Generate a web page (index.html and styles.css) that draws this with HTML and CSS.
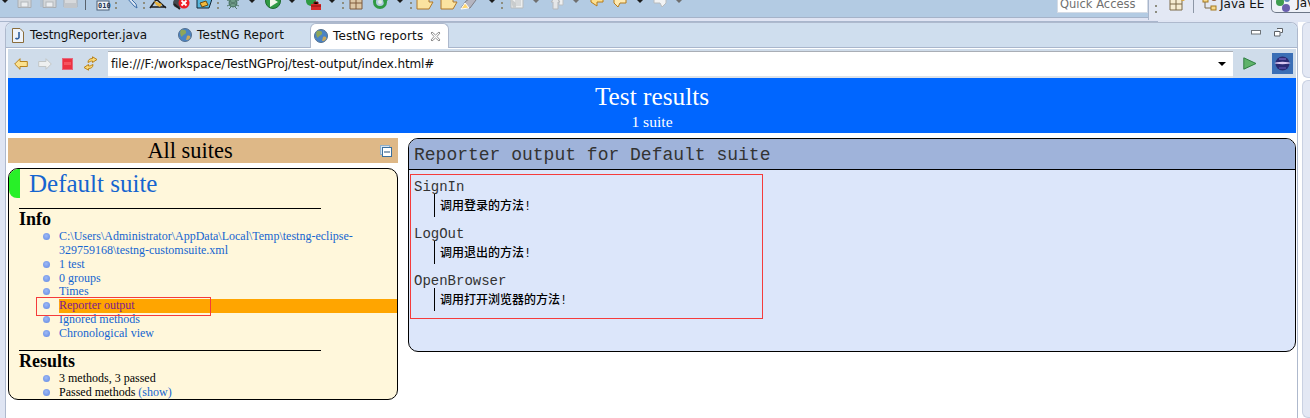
FILE: index.html
```html
<!DOCTYPE html>
<html lang="en">
<head>
<meta charset="utf-8">
<title>TestNG reports</title>
<link rel="stylesheet" href="styles.css">
</head>
<body>
<div class="app">
  <header class="topbar">
    <div class="toolbar">
      <svg class="toolbar-icons" width="700" height="17" viewBox="0 0 700 17">
        <defs>
          <polygon id="caret" points="-4,-1 4,-1 0,3" fill="#1c1c1c"/>
          <polygon id="caret-off" points="-4,-1 4,-1 0,3" fill="#6f6f6f"/>
          <g id="grip" fill="#8d8d7f"><rect x="0" y="2" width="2" height="2"/><rect x="0" y="7" width="2" height="2"/></g>
          <g id="floppy"><path d="M0-4H13V7.500H0Z" fill="#d3d6d9" stroke="#a9adb2"/><rect x="3" y="2" width="7" height="5" fill="#eceef0" stroke="#b4b7bb"/></g>
          <g id="folder"><path d="M0 9V-2H12V2H16L12 9Z" fill="#fbe3a0" stroke="#b0782a"/></g>
        </defs>
        <use href="#caret" x="5"/>
        <use href="#floppy" x="18"/>
        <use href="#floppy" x="43"/><path d="M41 7V-3" stroke="#b7bcc2"/>
        <path d="M64-3H77V7H64Z" fill="#d7d9dc" stroke="#a9adb2"/><rect x="64" y="3" width="13" height="5" fill="#c3c6ca"/>
        <rect x="85" y="0" width="1" height="10" fill="#59626d"/>
        <rect x="97" y="1" width="12" height="9" fill="#eef3f8" stroke="#4d6078"/>
        <text x="98" y="8" class="bin">010</text>
        <use href="#grip" x="115"/>
        <path d="M127-2L134 6L137 8L136 4L129-3Z" fill="#dce6f2" stroke="#3d6ea8"/>
        <use href="#grip" x="143"/>
        <path d="M150 8L158-3M166 8L155-2M151 7H166" fill="none" stroke="#1b1b1b" stroke-width="1.500"/><path d="M154 1L162 4L160 7L156 5Z" fill="#e8b23c"/>
        <circle cx="178" cy="3" r="5" fill="#1d1d1d" opacity=".75"/><path d="M174 4L180 9" stroke="#222" stroke-width="2"/>
        <circle cx="184" cy="3" r="5.500" fill="#ee1c25"/><path d="M181.500 .5L186.500 5.500M186.500 .5L181.500 5.500" stroke="#fff" stroke-width="1.800"/>
        <path d="M197 8V-1H212L209 8Z" fill="#57b6dd" stroke="#123"/><path d="M200 3L206 1L208 5L202 7Z" fill="#f0b93c" stroke="#6b4a12"/>
        <use href="#grip" x="217"/>
        <circle cx="233" cy="3" r="4" fill="#6f9c88" stroke="#3f6e5c"/><path d="M227 0L239 6M227 6L239 0M229 9L232 6M237 9L234 6" stroke="#53786a"/>
        <use href="#caret" x="252"/>
        <circle cx="273" cy="1" r="7.500" fill="#2f9a44" stroke="#1f6b30"/><polygon points="270,-3 278,2 270,7" fill="#f2f7e9"/>
        <use href="#caret" x="292"/>
        <circle cx="311" cy="1" r="5" fill="#2f9a44"/><rect x="311" y="4" width="10" height="6" fill="#d92a2a"/><path d="M311 6H321M314 4V2H318V4" stroke="#8c1111"/>
        <use href="#caret" x="332"/>
        <use href="#grip" x="342"/>
        <path d="M350-2H362V9H350ZM350 3H362M356-2V9" fill="#dcc7a6" stroke="#7e5a3c"/>
        <circle cx="380" cy="2" r="5.500" fill="none" stroke="#2f9a44" stroke-width="3"/><path d="M383 0H388L384 4Z" fill="#2f9a44"/><circle cx="380" cy="2" r="2" fill="#dfeee0"/>
        <use href="#caret" x="400"/>
        <use href="#grip" x="410"/>
        <use href="#folder" x="417"/><path d="M421-1H431" stroke="#48a04d" stroke-width="2"/>
        <use href="#folder" x="441"/>
        <path d="M461 8L466 1L473-3L476 0L470 8Z" fill="#b5b5c0" stroke="#7e7e86"/><path d="M461 9L465 3L469 8Z" fill="#ffd76e" stroke="#fff"/>
        <use href="#caret" x="492"/>
        <use href="#grip" x="501"/>
        <path d="M511-3H523V8H511Z" fill="#eceeef" stroke="#b9bcbd"/><path d="M515 1H521M515 3H521M515 5H521" stroke="#c0c3c5"/><path d="M510-2L516 3V8H513Z" fill="#c9cccd"/>
        <use href="#caret-off" x="536"/>
        <path d="M559-3H563V5H559Z" fill="#eeeff0" stroke="#bcbfc2"/><polygon points="551,2 555.500,-3 560,2 558,2 558,9 553,9 553,2" fill="#e4e6e8" stroke="#b5b8bb"/>
        <use href="#caret-off" x="576"/>
        <path d="M591-3H603V2H597V6L591 2Z" fill="#fddf8f" stroke="#b77c1b"/><path d="M593-1H601" stroke="#fff3c7"/>
        <path d="M614-3H626V3H620L618 7L614 3Z" fill="#feeab3" stroke="#b77c1b"/>
        <use href="#caret" x="640"/>
        <path d="M654-3H666V3L662 7L660 3H654Z" fill="#f2f3f4" stroke="#b9bcbe"/>
        <use href="#caret-off" x="679"/>
      </svg>
      <div class="quick-access">Quick Access</div>
    </div>
    <div class="perspectives">
      <span class="grip"></span>
      <svg class="persp-open" width="18" height="18" viewBox="0 0 18 18"><path d="M1 3H13V14H1ZM1 8H13M7 3V14" fill="#f6ecd2" stroke="#7c6a48"/><circle cx="14" cy="3" r="2" fill="#d9a63e"/></svg>
      <span class="persp-sep"></span>
      <div class="persp persp-ee">
        <svg width="16" height="18" viewBox="0 0 16 18"><rect x="1" y="2" width="5" height="4" fill="#f6d98c" stroke="#a5781f"/><rect x="9" y="10" width="5" height="4" fill="#f6d98c" stroke="#a5781f"/><path d="M3 6V12H9" fill="none" stroke="#7c6a48"/><circle cx="12" cy="2" r="3" fill="#8c5a3c"/></svg>
        <span>Java EE</span>
      </div>
      <div class="persp persp-active">
        <svg width="16" height="18" viewBox="0 0 16 18"><circle cx="5" cy="7" r="4" fill="#3f9d4f"/><circle cx="11" cy="13" r="4" fill="#6a5fae"/><circle cx="12" cy="4" r="3" fill="#5b89b8"/></svg>
        <span>Java</span>
      </div>
    </div>
  </header>

  <div class="workspace">
    <section class="editor">
      <nav class="tabs">
        <div class="tab tab-file">
          <svg width="12" height="15" viewBox="0 0 12 15"><path d="M.5.5H8L11.500 4V14.500H.5Z" fill="#eef3fa" stroke="#8a6d3b"/><path d="M7 4V9.500A2 2 0 0 1 3.500 10" fill="none" stroke="#2f5f9e" stroke-width="1.600"/></svg>
          <span>TestngReporter.java</span>
        </div>
        <div class="tab tab-report">
          <svg class="globe" width="14" height="14" viewBox="0 0 14 14"><circle cx="7" cy="7" r="6.500" fill="#4b84c4" stroke="#53708f"/><path d="M3 2C6 1 9 2 8 5C7 7 5 6 4 9C3 8 1 5 3 2Z" fill="#8ea65a"/><path d="M9 8C11 7 13 8 12 10C11 12 9 12 8 12Z" fill="#c9a95a"/></svg>
          <span>TestNG Report</span>
        </div>
        <div class="tab tab-active">
          <svg class="globe" width="14" height="14" viewBox="0 0 14 14"><circle cx="7" cy="7" r="6.500" fill="#4b84c4" stroke="#53708f"/><path d="M3 2C6 1 9 2 8 5C7 7 5 6 4 9C3 8 1 5 3 2Z" fill="#8ea65a"/><path d="M9 8C11 7 13 8 12 10C11 12 9 12 8 12Z" fill="#c9a95a"/></svg>
          <span>TestNG reports</span>
          <svg class="tab-close" width="11" height="11" viewBox="0 0 11 11"><path d="M1 2L2 1L5.500 4L9 1L10 2L7 5.500L10 9L9 10L5.500 7L2 10L1 9L4 5.500Z" fill="#fff" stroke="#8f8f8f"/></svg>
        </div>
        <div class="view-controls">
          <svg width="10" height="5" viewBox="0 0 10 5"><rect x=".5" y=".5" width="9" height="3.500" fill="#fff" stroke="#6f7479"/></svg>
          <svg width="9" height="9" viewBox="0 0 9 9"><path d="M3 .5H8.500V4.500H6.500M.5 3.500H6V8H.5Z" fill="#fff" stroke="#5d6166"/></svg>
        </div>
      </nav>

      <div class="browser">
        <div class="address-row">
          <div class="nav-icons">
            <svg width="14" height="12" viewBox="0 0 14 12"><path d="M.7 6L6 .7V3.500H13.300V8.500H6V11.300Z" fill="#fbe18f" stroke="#b8821c"/></svg>
            <svg width="14" height="12" viewBox="0 0 14 12"><path d="M13.300 6L8 .7V3.500H.7V8.500H8V11.300Z" fill="#eef0f0" stroke="#c2c6c6"/></svg>
            <svg width="11" height="12" viewBox="0 0 11 12"><rect x=".5" y=".5" width="10" height="11" fill="#ec3141" stroke="#e5677d"/><rect x="2" y="4" width="7" height="3" fill="#f6535f"/></svg>
            <svg width="15" height="15" viewBox="0 0 15 15"><path d="M5 6.500C5 3.500 7 2.500 9.500 2.500V.8L14 3.500L9.500 6.500V5C8 5 7 5.500 5 6.500Z" fill="#fbd874" stroke="#b8821c"/><path d="M10 8.500C10 11.500 8 12.500 5.500 12.500V14.200L1 11.500L5.500 8.500V10C7 10 8 9.500 10 8.500Z" fill="#fbd874" stroke="#b8821c"/></svg>
          </div>
          <div class="url-field">
            <span class="url-text">file:///F:/workspace/TestNGProj/test-output/index.html#</span>
            <svg width="8" height="4" viewBox="0 0 8 4"><polygon points="0,0 8,0 4,4" fill="#000"/></svg>
          </div>
          <svg class="go" width="14" height="13" viewBox="0 0 14 13"><polygon points=".8,.8 13,6.500 .8,12.200" fill="#5fb36b" stroke="#2f7f43"/></svg>
          <svg class="browser-logo" width="21" height="21" viewBox="0 0 21 21"><rect width="21" height="21" fill="#3b6fb6"/><circle cx="10.500" cy="10.500" r="7" fill="#2a2a73"/><ellipse cx="10.500" cy="10" rx="8" ry="1.200" fill="#d8c6f0"/><path d="M7 6H14" stroke="#8f78d8"/><path d="M7 15H14" stroke="#6f5cc0"/></svg>
        </div>

        <div class="report-banner">
          <div class="report-title">Test results</div>
          <div class="report-subtitle">1 suite</div>
        </div>

        <div class="report">
          <aside class="sidebar">
            <div class="all-suites">
              <span>All suites</span>
              <svg class="collapse" width="12" height="12" viewBox="0 0 12 12"><rect x=".5" y=".5" width="9" height="9" fill="#d5e4f2" stroke="#8fb0cc"/><rect x="2.500" y="2.500" width="9" height="9" fill="#fff" stroke="#3a6f9e"/><rect x="4" y="6.500" width="6" height="1" fill="#224f78"/></svg>
            </div>
            <div class="suite">
              <div class="suite-head">
                <span class="suite-status"></span>
                <a class="suite-name">Default suite</a>
              </div>
              <div class="suite-section">
                <h3>Info</h3>
                <ul>
                  <li><a>C:\Users\Administrator\AppData\Local\Temp\testng-eclipse-329759168\testng-customsuite.xml</a></li>
                  <li><a>1 test</a></li>
                  <li><a>0 groups</a></li>
                  <li><a>Times</a></li>
                  <li class="selected"><a>Reporter output</a></li>
                  <li><a>Ignored methods</a></li>
                  <li><a>Chronological view</a></li>
                </ul>
              </div>
              <div class="suite-section results">
                <h3>Results</h3>
                <ul>
                  <li>3 methods, 3 passed</li>
                  <li>Passed methods <a>(show)</a></li>
                </ul>
              </div>
            </div>
            <div class="mark mark-left"></div>
          </aside>

          <main class="panel">
            <h2 class="panel-head">Reporter output for Default suite</h2>
            <div class="panel-body">
              <div class="entry">
                <div class="entry-name">SignIn</div>
                <div class="entry-text">调用登录的方法!</div>
              </div>
              <div class="entry">
                <div class="entry-name">LogOut</div>
                <div class="entry-text">调用退出的方法!</div>
              </div>
              <div class="entry">
                <div class="entry-name">OpenBrowser</div>
                <div class="entry-text">调用打开浏览器的方法!</div>
              </div>
              <div class="mark mark-right"></div>
            </div>
          </main>
        </div>
      </div>
    </section>
    <div class="side-dock">
      <div class="dock-box dock-top"></div>
      <div class="dock-box dock-bottom"></div>
    </div>
  </div>
</div>
</body>
</html>
```
FILE: styles.css
```css
* { box-sizing: border-box; }
html, body { margin: 0; padding: 0; }
body {
  width: 1310px;
  height: 418px;
  overflow: hidden;
  background: #dfe5f3;
  font-family: "Liberation Serif", serif;
}
.app { width: 1310px; height: 418px; display: flex; flex-direction: column; overflow: hidden; }

.topbar { display: flex; height: 22px; flex: none; }
.toolbar {
  width: 1158px;
  height: 22px;
  display: flex;
  align-items: flex-start;
  background: linear-gradient(#b3cbe3 0 17px, #a5b3c9 17px 18px, #e0e4f3 18px 21px, #a9b6cc 21px 22px);
}
.toolbar-icons { flex: none; overflow: hidden; display: block; }
.bin { font: bold 7px "DejaVu Sans Mono", monospace; fill: #1f3550; }
.quick-access {
  margin-left: 357px;
  width: 91px;
  height: 13px;
  flex: none;
  background: #fff;
  border: 1px solid #d4dbe5;
  border-top: 0;
  color: #6f6f6f;
  font: 11.5px/1 "DejaVu Sans", sans-serif;
  padding-left: 2px;
  overflow: hidden;
  display: flex;
  align-items: flex-end;
  padding-bottom: 2px;
}
.perspectives {
  flex: 1;
  display: flex;
  align-items: flex-start;
  height: 20px;
  overflow: hidden;
  background: #e3e8f4;
  border-left: 1px solid #a9b6cc;
  margin-left: -10px;
  padding-left: 5px;
  font: 12px/1 "DejaVu Sans", sans-serif;
}
.grip { width: 2px; height: 8px; margin: 5px 0 0 1px; flex: none; border-top: 2px solid #8d8d7f; border-bottom: 2px solid #8d8d7f; }
.persp-open { margin: -4px 0 0 12px; flex: none; }
.persp-sep { width: 1px; height: 13px; background: #8d97a6; margin: 0 0 0 6px; flex: none; }
.persp { display: flex; align-items: center; gap: 2px; height: 14px; flex: none; margin-left: 6px; color: #111; }
.persp svg { flex: none; margin-top: -4px; }
.persp span { margin-top: -7px; }
.persp-ee { margin-left: 8px; }
.persp-active {
  margin-left: 7px;
  padding-left: 3px;
  gap: 5px;
  height: 13px;
  border: 1px solid #6d7786;
  border-top: 0;
  border-radius: 0 0 0 5px;
  background: #eff2f8;
}

.workspace { flex: 1; display: flex; min-height: 0; }
.editor {
  width: 1293px;
  margin-left: 5px;
  flex: none;
  background: #fff;
  border: 1px solid #aeb9cd;
  border-bottom: 0;
  border-radius: 7px 7px 0 0;
  display: flex;
  flex-direction: column;
  min-height: 0;
  overflow: hidden;
}
.tabs {
  height: 25px;
  flex: none;
  display: flex;
  align-items: stretch;
  background: #cfdeee;
  border-bottom: 1px solid #a9b6cc;
  font: 12px/1 "DejaVu Sans", sans-serif;
  color: #111;
}
.tab { display: flex; align-items: center; gap: 5px; flex: none; }
.tab-file { width: 172px; padding-left: 6px; gap: 6px; letter-spacing: -.1px; }
.tab-report { width: 132px; padding-left: 0; gap: 5px; letter-spacing: .12px; }
.tab-active {
  width: 139px;
  padding-left: 3px;
  background: #fff;
  border: 1px solid #aeb9cd;
  border-bottom: 0;
  border-radius: 6px 6px 0 0;
  gap: 5px;
  height: 25px;
  letter-spacing: .12px;
}
.tab-close { margin-left: 2px; }
.view-controls { margin-left: auto; display: flex; gap: 13px; align-items: center; padding: 0 14px 6px 0; }

.browser { flex: 1; min-height: 0; padding: 0 1px 0 2px; display: flex; flex-direction: column; background: #fff; }
.address-row {
  height: 30px;
  flex: none;
  display: flex;
  align-items: center;
  background: #cfdcea;
  border-top: 1px solid #fff;
}
.nav-icons { display: flex; align-items: center; width: 100px; gap: 10px; padding-left: 6px; flex: none; }
.nav-icons svg { flex: none; }
.url-field {
  width: 1125px;
  height: 27px;
  flex: none;
  margin-top: 2px;
  display: flex;
  align-items: center;
  justify-content: space-between;
  padding: 0 7px 0 3px;
  background: #fff;
  border-top: 1px solid #a9aeb6;
  border-bottom: 2px solid #dfe3e8;
  font: 12px/1 "DejaVu Sans", sans-serif;
  letter-spacing: -.13px;
  color: #111;
}
.go { margin-left: 10px; flex: none; }
.browser-logo { margin-left: 15px; flex: none; }

.report-banner {
  height: 55px;
  flex: none;
  background: #0066ff;
  color: #fff;
  text-align: center;
  padding-top: 4px;
}
.report-title { font-size: 25.300px; line-height: 28px; }
.report-subtitle { font-size: 15.600px; line-height: 21px; padding-top: 1px; }

.report { display: flex; gap: 10px; padding-top: 5px; align-items: flex-start; }
.sidebar { width: 390px; flex: none; position: relative; }
.all-suites {
  height: 25px;
  background: #deb887;
  display: flex;
  align-items: center;
  justify-content: center;
  font-size: 22.4px;
  padding-right: 26px;
  position: relative;
}
.collapse { position: absolute; right: 6px; top: 7px; }
.suite {
  margin-top: 5px;
  height: 232px;
  background: #fff7db;
  border: 1px solid #000;
  border-radius: 10px;
  overflow: hidden;
}
.suite-head { display: flex; align-items: flex-start; gap: 9px; height: 39px; }
.suite-status { width: 11px; height: 29px; background: #28f028; border-radius: 8px 0 0 8px; flex: none; }
.suite-name { color: #1565d0; font-size: 25px; line-height: 29px; }
.suite-section { margin-left: 10px; }
.suite-section h3 {
  width: 302px;
  margin: 0;
  border-top: 1px solid #000;
  font-size: 18px;
  line-height: 21px;
  color: #000;
}
.suite-section ul { list-style: none; margin: 0; padding: 0 0 0 40px; width: 379px; }
.suite-section li { font-size: 12px; line-height: 13.860px; position: relative; }
.suite-section li::before {
  content: "";
  position: absolute;
  left: -16px;
  top: 3px;
  width: 7px;
  height: 7px;
  border-radius: 50%;
  background: radial-gradient(circle at 45% 40%, #9db9f5, #5f87e2);
}
.suite-section a { color: #1565d0; }
.suite-section .selected { background: #ffa500; }
.suite-section .selected a { color: #7d1a8d; }
.results { margin-top: 9px; }

.mark { position: absolute; border: 1px solid #f53b3b; pointer-events: none; }
.mark-left { left: 28px; top: 159px; width: 175px; height: 19px; }

.panel {
  width: 888px;
  height: 214px;
  flex: none;
  background: #dce6fa;
  border: 1px solid #000;
  border-radius: 10px;
  overflow: hidden;
}
.panel-head {
  margin: 0;
  height: 31px;
  background: #9fb3da;
  border-bottom: 1px solid #000;
  padding-left: 5px;
  font: normal 18px/32px "Liberation Mono", monospace;
  color: #333;
}
.panel-body { position: relative; padding: 9px 0 0 5px; }
.entry { height: 47px; }
.entry-name { padding-top: 2px; font: 14px/13px "Liberation Mono", monospace; color: #333; }
.entry-text {
  margin: 0 0 0 20px;
  padding-left: 5px;
  border-left: 1px solid #000;
  height: 23px;
  color: #000;
  font: 500 12px/26px "Liberation Mono", "Noto Sans CJK SC", sans-serif;
}
.panel-body .mark-right { left: 1px; top: 4px; width: 353px; height: 145px; border: 1px solid #f53b3b; }

.side-dock { flex: 1; display: flex; flex-direction: column; gap: 2px; padding: 0 0 0 4px; background: #fff; }
.dock-box { background: #e3e8f4; border: 1px solid #c9d1e2; border-right: 0; border-radius: 6px 0 0 6px; }
.dock-top { height: 56px; }
.dock-bottom { flex: 1; }
```
